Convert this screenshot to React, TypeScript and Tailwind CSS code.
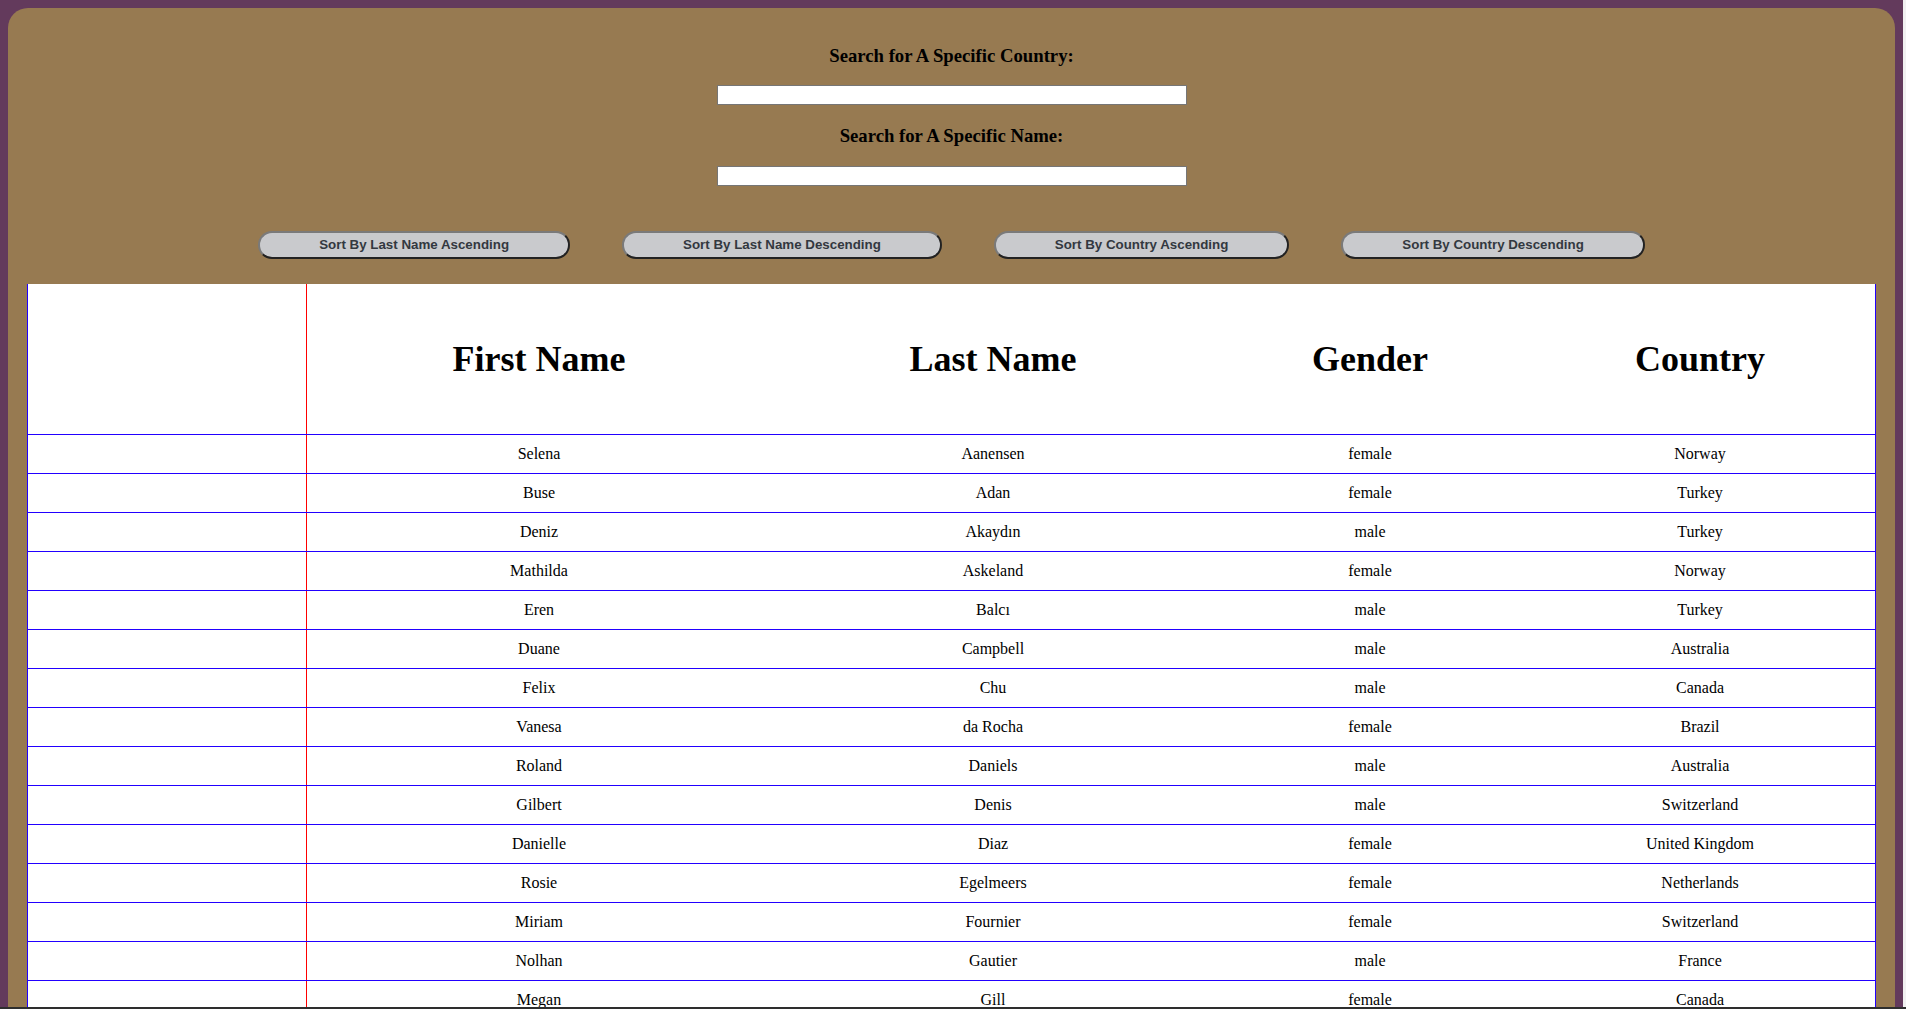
import React from "react";

const rows: [string, string, string, string][] = [
  ["Selena", "Aanensen", "female", "Norway"],
  ["Buse", "Adan", "female", "Turkey"],
  ["Deniz", "Akaydın", "male", "Turkey"],
  ["Mathilda", "Askeland", "female", "Norway"],
  ["Eren", "Balcı", "male", "Turkey"],
  ["Duane", "Campbell", "male", "Australia"],
  ["Felix", "Chu", "male", "Canada"],
  ["Vanesa", "da Rocha", "female", "Brazil"],
  ["Roland", "Daniels", "male", "Australia"],
  ["Gilbert", "Denis", "male", "Switzerland"],
  ["Danielle", "Diaz", "female", "United Kingdom"],
  ["Rosie", "Egelmeers", "female", "Netherlands"],
  ["Miriam", "Fournier", "female", "Switzerland"],
  ["Nolhan", "Gautier", "male", "France"],
  ["Megan", "Gill", "female", "Canada"],
  ["Lucas", "Gomes", "male", "Brazil"],
];

const buttons = [
  "Sort By Last Name Ascending",
  "Sort By Last Name Descending",
  "Sort By Country Ascending",
  "Sort By Country Descending",
];

const grid = "grid grid-cols-[279px_464px_444px_310px_350px]";

export default function App() {
  return (
    <div className="h-screen w-full overflow-hidden bg-[#633a5c] font-['Liberation_Serif',serif]">
      <div className="w-[1903px] pl-2 pr-2 pt-2">
        <div className="flex min-h-[1100px] flex-col items-center rounded-t-[20px] bg-[#977a51] px-[19px]">
          <h3 className="mt-[37px] text-[18.72px] font-bold leading-[21px] text-black">
            Search for A Specific Country:
          </h3>
          <input
            type="text"
            className="mt-[19px] h-[20px] w-[470px] border border-[#767676] bg-white"
          />
          <h3 className="mt-[20px] text-[18.72px] font-bold leading-[21px] text-black">
            Search for A Specific Name:
          </h3>
          <input
            type="text"
            className="mt-[20px] h-[20px] w-[470px] border border-[#767676] bg-white"
          />
          <div className="mt-[45px] flex justify-center gap-[52px]">
            {buttons.map((b) => (
              <button
                key={b}
                className="h-[28px] rounded-[14px] border-2 border-t-[#7a7a7a] border-l-[#7a7a7a] border-b-[#222222] border-r-[#222222] bg-[#c9cacd] px-[59px] font-['Liberation_Sans',Arial,sans-serif] text-[13.33px] font-bold text-[#333840]"
              >
                {b}
              </button>
            ))}
          </div>
          <div className="mt-[25px] w-[1849px] border-x border-[#2200ff] bg-white">
            <div className={`${grid} h-[151px] border-b border-[#2200ff]`}>
              <div className="border-r border-[#ff0000]" />
              {["First Name", "Last Name", "Gender", "Country"].map((h) => (
                <div
                  key={h}
                  className="flex items-center justify-center text-[36px] font-bold text-black"
                >
                  {h}
                </div>
              ))}
            </div>
            {rows.map((r, i) => (
              <div
                key={i}
                className={`${grid} h-[39px] border-b border-[#2200ff]`}
              >
                <div className="border-r border-[#ff0000]" />
                {r.map((c, j) => (
                  <div
                    key={j}
                    className="flex items-center justify-center text-[16px] text-black"
                  >
                    {c}
                  </div>
                ))}
              </div>
            ))}
          </div>
        </div>
      </div>
      <div className="fixed right-0 top-0 h-full w-[3px] bg-[#f1f1f1]" />
      <div className="fixed bottom-0 left-0 h-[2px] w-full bg-[#2e2e2e]" />
    </div>
  );
}
